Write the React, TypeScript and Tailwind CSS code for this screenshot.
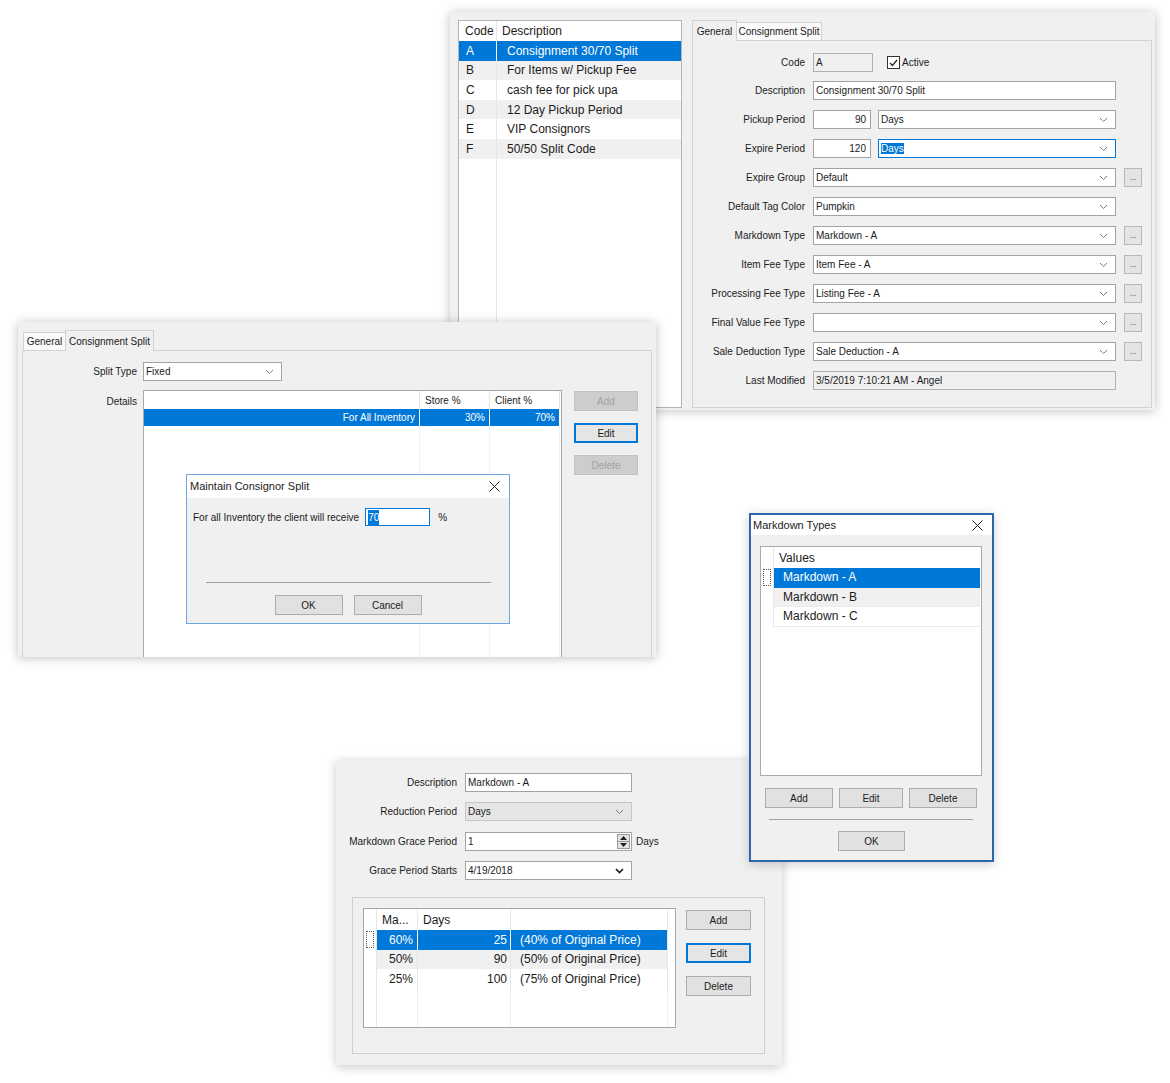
import React from "react";

const btnBase = "h-[20px] flex items-center justify-center text-[10px] border";

function Chevron({ dark = false }: { dark?: boolean }) {
  return (
    <svg width="9" height="6" viewBox="0 0 9 6" className="shrink-0">
      <path
        d="M1 1 L4.5 4.5 L8 1"
        fill="none"
        stroke={dark ? "#1f1f1f" : "#7c7c7c"}
        strokeWidth={dark ? 1.7 : 1}
      />
    </svg>
  );
}

function CloseX() {
  return (
    <svg width="11" height="11" viewBox="0 0 11 11">
      <path d="M0.5 0.5 L10.5 10.5 M10.5 0.5 L0.5 10.5" stroke="#222" strokeWidth="1" />
    </svg>
  );
}

function TextBox({
  value,
  className = "",
  right = false,
  readOnly = false,
}: {
  value?: string;
  className?: string;
  right?: boolean;
  readOnly?: boolean;
}) {
  return (
    <div
      className={`h-[19px] border flex items-center pl-[2px] text-[10px] shrink-0 ${
        readOnly ? "bg-[#f0f0f0] border-[#b0b0b0]" : "bg-white border-[#a3a3a3]"
      } ${right ? "justify-end pr-[4px]" : ""} ${className}`}
    >
      {value}
    </div>
  );
}

function Combo({
  value,
  className = "",
  focused = false,
  disabled = false,
  dark = false,
}: {
  value?: string;
  className?: string;
  focused?: boolean;
  disabled?: boolean;
  dark?: boolean;
}) {
  return (
    <div
      className={`h-[19px] border flex items-center pl-[2px] pr-[7px] text-[10px] shrink-0 ${
        focused
          ? "border-[#0078d7] bg-white"
          : disabled
          ? "border-[#c6c6c6] bg-[#e5e5e5]"
          : "border-[#a3a3a3] bg-white"
      } ${className}`}
    >
      <span className="flex-1 truncate">
        {focused ? <span className="bg-[#0078d7] text-white">{value}</span> : value}
      </span>
      <Chevron dark={dark} />
    </div>
  );
}

function Dots() {
  return (
    <div className="w-[18px] h-[19px] border border-[#b8b8b8] bg-[#e4e4e4] flex items-end justify-center pb-[4px] text-[8px] leading-none text-[#333] shrink-0">
      ...
    </div>
  );
}

function Btn({
  label,
  className = "",
  kind = "normal",
}: {
  label: string;
  className?: string;
  kind?: "normal" | "default" | "disabled";
}) {
  const look =
    kind === "default"
      ? "bg-[#e5e5e5] border-[#0078d7] shadow-[inset_0_0_0_1px_#0078d7]"
      : kind === "disabled"
      ? "bg-[#cdcdcd] border-[#c2c2c2] text-[#a2a2a2]"
      : "bg-[#e1e1e1] border-[#adadad]";
  return <div className={`${btnBase} ${look} ${className}`}>{label}</div>;
}

function FocusRect() {
  return <div className="w-[8px] h-[17px] border border-dotted border-[#555] bg-white" />;
}

const codes = [
  ["A", "Consignment 30/70 Split"],
  ["B", "For Items w/ Pickup Fee"],
  ["C", "cash fee for pick upa"],
  ["D", "12 Day Pickup Period"],
  ["E", "VIP Consignors"],
  ["F", "50/50 Split Code"],
];

const generalRows: { label: string; value: string; dots: boolean }[] = [
  { label: "Expire Group", value: "Default", dots: true },
  { label: "Default Tag Color", value: "Pumpkin", dots: false },
  { label: "Markdown Type", value: "Markdown - A", dots: true },
  { label: "Item Fee Type", value: "Item Fee - A", dots: true },
  { label: "Processing Fee Type", value: "Listing Fee - A", dots: true },
  { label: "Final Value Fee Type", value: "", dots: true },
  { label: "Sale Deduction Type", value: "Sale Deduction - A", dots: true },
];

const markdowns = [
  ["60%", "25", "(40% of Original Price)"],
  ["50%", "90", "(50% of Original Price)"],
  ["25%", "100", "(75% of Original Price)"],
];

function Label({ text, className = "w-[112px]" }: { text: string; className?: string }) {
  return <div className={`text-right text-[10px] shrink-0 ${className}`}>{text}</div>;
}

export default function App() {
  return (
    <div className="relative w-[1170px] h-[1083px] bg-white overflow-hidden font-['Liberation_Sans',Arial,sans-serif] text-[#1b1b1b]">
      {/* Consignment codes window */}
      <div className="absolute left-[450px] top-[12px] w-[705px] h-[398px] bg-[#f0f0f0] shadow-[0_1px_10px_rgba(0,0,0,0.25)] flex pl-[8px] pt-[8px] gap-[10px]">
        <div className="w-[224px] h-[388px] bg-white border border-[#b4b4b4] flex flex-col text-[12px]">
          <div className="flex h-[20px] items-center shrink-0">
            <div className="w-[38px] pl-[6px] h-full flex items-center border-r border-[#e6e6e6]">Code</div>
            <div className="pl-[5px]">Description</div>
          </div>
          {codes.map(([c, d], i) => (
            <div
              key={c}
              className={`flex h-[19.6px] items-center shrink-0 ${
                i === 0 ? "bg-[#0078d7] text-white" : i % 2 === 1 ? "bg-[#f0f0f0]" : ""
              }`}
            >
              <div
                className={`w-[38px] pl-[7px] h-full flex items-center border-r ${
                  i === 0 ? "border-white" : "border-[#e6e6e6]"
                }`}
              >
                {c}
              </div>
              <div className="pl-[10px]">{d}</div>
            </div>
          ))}
          <div className="flex-1 flex">
            <div className="w-[38px] border-r border-[#e6e6e6]" />
          </div>
        </div>

        <div className="w-[460px] flex flex-col">
          <div className="flex items-end h-[20px] text-[10px] shrink-0">
            <div className="w-[45px] h-[21px] bg-[#f0f0f0] border border-b-0 border-[#d2d2d2] flex items-center justify-center relative top-[1px] z-10">
              General
            </div>
            <div className="w-[85px] h-[18px] bg-[#fafafa] border border-l-0 border-b-0 border-[#d2d2d2] flex items-center justify-center">
              Consignment Split
            </div>
          </div>
          <div className="h-[368px] border border-[#d2d2d2] pt-[12px] flex flex-col gap-[10px]">
            <div className="flex items-center h-[19px] gap-[8px]">
              <Label text="Code" />
              <TextBox value="A" readOnly className="w-[60px]" />
              <div className="ml-[6px] w-[13px] h-[13px] border border-[#333] bg-white flex items-center justify-center">
                <svg width="9" height="8" viewBox="0 0 9 8">
                  <path d="M1 4 L3.5 6.5 L8 1" fill="none" stroke="#222" strokeWidth="1.2" />
                </svg>
              </div>
              <div className="text-[10px] -ml-[6px]">Active</div>
            </div>
            <div className="flex items-center h-[19px] gap-[8px] -mt-[1px]">
              <Label text="Description" />
              <TextBox value="Consignment 30/70 Split" className="w-[303px]" />
            </div>
            <div className="flex items-center h-[19px] gap-[8px]">
              <Label text="Pickup Period" />
              <TextBox value="90" right className="w-[58px]" />
              <Combo value="Days" className="w-[238px] -ml-[1px]" />
            </div>
            <div className="flex items-center h-[19px] gap-[8px]">
              <Label text="Expire Period" />
              <TextBox value="120" right className="w-[58px]" />
              <Combo value="Days" focused className="w-[238px] -ml-[1px]" />
            </div>
            {generalRows.map((r) => (
              <div key={r.label} className="flex items-center h-[19px] gap-[8px]">
                <Label text={r.label} />
                <Combo value={r.value} className="w-[303px]" />
                {r.dots && <Dots />}
              </div>
            ))}
            <div className="flex items-center h-[19px] gap-[8px]">
              <Label text="Last Modified" />
              <TextBox value="3/5/2019 7:10:21 AM - Angel" readOnly className="w-[303px]" />
            </div>
          </div>
        </div>
      </div>

      {/* Markdown type editor */}
      <div className="absolute left-[336px] top-[760px] w-[446px] h-[305px] bg-[#f0f0f0] shadow-[0_2px_10px_rgba(0,0,0,0.22)] pt-[13px] flex flex-col">
        <div className="flex flex-col gap-[10px]">
          <div className="flex items-center h-[19px] gap-[8px]">
            <Label text="Description" className="w-[121px]" />
            <TextBox value="Markdown - A" className="w-[167px]" />
          </div>
          <div className="flex items-center h-[19px] gap-[8px]">
            <Label text="Reduction Period" className="w-[121px]" />
            <Combo value="Days" disabled className="w-[167px]" />
          </div>
          <div className="flex items-center h-[19px] gap-[8px] mt-[1px]">
            <Label text="Markdown Grace Period" className="w-[121px]" />
            <div className="w-[167px] h-[19px] border border-[#a3a3a3] bg-white flex items-center pl-[2px] pr-[1px] text-[10px]">
              <span className="flex-1">1</span>
              <div className="w-[13px] h-[15px] flex flex-col border border-[#9a9a9a] bg-[#e4e4e4]">
                <div className="flex-1 flex items-center justify-center border-b border-[#9a9a9a]">
                  <svg width="7" height="4" viewBox="0 0 7 4">
                    <path d="M0 4 L3.5 0 L7 4 Z" fill="#222" />
                  </svg>
                </div>
                <div className="flex-1 flex items-center justify-center">
                  <svg width="7" height="4" viewBox="0 0 7 4">
                    <path d="M0 0 L3.5 4 L7 0 Z" fill="#222" />
                  </svg>
                </div>
              </div>
            </div>
            <div className="text-[10px] -ml-[4px]">Days</div>
          </div>
          <div className="flex items-center h-[19px] gap-[8px]">
            <Label text="Grace Period Starts" className="w-[121px]" />
            <Combo value="4/19/2018" dark className="w-[167px]" />
          </div>
        </div>

        <div className="ml-[16px] mt-[17px] w-[413px] h-[157px] border border-[#cfcfcf] pl-[10px] pt-[10px] flex gap-[10px]">
          <div className="w-[313px] h-[120px] bg-white border border-[#a8a8a8] flex flex-col text-[12px]">
            <div className="flex h-[21px] items-center shrink-0">
              <div className="w-[13px] h-full border-r border-[#e6e6e6]" />
              <div className="w-[41px] h-full flex items-center pl-[5px] border-r border-[#e6e6e6]">Ma...</div>
              <div className="w-[93px] h-full flex items-center pl-[5px] border-r border-[#e6e6e6]">Days</div>
              <div className="w-[157px] h-full border-r border-[#e6e6e6]" />
            </div>
            {markdowns.map(([p, d, t], i) => (
              <div key={p} className="flex h-[19.5px] shrink-0">
                <div className="w-[13px] h-full flex items-center justify-center border-r border-[#e6e6e6]">
                  {i === 0 && <FocusRect />}
                </div>
                <div
                  className={`flex h-full ${
                    i === 0 ? "bg-[#0078d7] text-white" : i === 1 ? "bg-[#f0f0f0]" : ""
                  }`}
                >
                  <div className={`w-[41px] h-full flex items-center justify-end pr-[4px] border-r ${i === 0 ? "border-white" : "border-[#e6e6e6]"}`}>{p}</div>
                  <div className={`w-[93px] h-full flex items-center justify-end pr-[3px] border-r ${i === 0 ? "border-white" : "border-[#e6e6e6]"}`}>{d}</div>
                  <div className="w-[157px] h-full flex items-center pl-[9px] border-r border-[#e6e6e6]">{t}</div>
                </div>
              </div>
            ))}
            <div className="flex flex-1">
              <div className="w-[13px] border-r border-[#e6e6e6]" />
              <div className="w-[41px] border-r border-dotted border-[#e0e0e0]" />
              <div className="w-[93px] border-r border-dotted border-[#e0e0e0]" />
              <div className="w-[157px] border-r border-dotted border-[#e0e0e0]" />
            </div>
          </div>
          <div className="flex flex-col gap-[13px] pt-[2px]">
            <Btn label="Add" className="w-[65px]" />
            <Btn label="Edit" kind="default" className="w-[65px]" />
            <Btn label="Delete" className="w-[65px]" />
          </div>
        </div>
      </div>

      {/* Consignment split tab */}
      <div className="absolute left-[18px] top-[322px] w-[638px] h-[335px] bg-[#f0f0f0] shadow-[0_1px_10px_rgba(0,0,0,0.25)] pl-[4px] pt-[8px] flex flex-col">
        <div className="flex items-end h-[20px] text-[10px] shrink-0">
          <div className="ml-[1px] w-[42px] h-[18px] bg-[#fafafa] border border-r-0 border-b-0 border-[#d2d2d2] flex items-center justify-center">
            General
          </div>
          <div className="w-[89px] h-[21px] bg-[#f0f0f0] border border-b-0 border-[#d2d2d2] flex items-center justify-center relative top-[1px] z-10">
            Consignment Split
          </div>
        </div>
        <div className="w-[630px] flex-1 border border-b-0 border-[#d2d2d2] pt-[11px] flex flex-col">
          <div className="flex items-center h-[19px] gap-[6px]">
            <Label text="Split Type" className="w-[114px]" />
            <Combo value="Fixed" className="w-[139px]" />
          </div>
          <div className="flex mt-[9px] flex-1">
            <Label text="Details" className="w-[114px] pt-[4px]" />
            <div className="ml-[6px] w-[419px] h-[267px] bg-white border border-b-0 border-[#a8a8a8] flex text-[10px]">
              {[
                { w: "w-[276px]", h: "", v: "For All Inventory" },
                { w: "w-[70px]", h: "Store %", v: "30%" },
                { w: "w-[70px]", h: "Client %", v: "70%" },
              ].map((c) => (
                <div key={c.v} className={`${c.w} flex flex-col`}>
                  <div className="h-[18px] flex items-center pl-[5px] border-r border-[#e3e3e3] shrink-0">{c.h}</div>
                  <div className="h-[17px] flex items-center justify-end pr-[4px] bg-[#0078d7] text-white border-r border-white shrink-0">
                    {c.v}
                  </div>
                  <div className="flex-1 border-r border-dotted border-[#e3e3e3]" />
                </div>
              ))}
            </div>
            <div className="ml-[12px] pt-[1px] flex flex-col gap-[12px]">
              <Btn label="Add" kind="disabled" className="w-[64px]" />
              <Btn label="Edit" kind="default" className="w-[64px]" />
              <Btn label="Delete" kind="disabled" className="w-[64px]" />
            </div>
          </div>
        </div>
      </div>

      {/* Maintain Consignor Split dialog */}
      <div className="absolute left-[186px] top-[474px] w-[324px] h-[150px] border border-[#6ea7e4] bg-[#f0f0f0] flex flex-col">
        <div className="h-[23px] bg-white flex items-center justify-between pl-[3px] pr-[9px] text-[11px] shrink-0">
          <span>Maintain Consignor Split</span>
          <CloseX />
        </div>
        <div className="flex items-center h-[18px] mt-[10px] pl-[6px] text-[10px]">
          <span>For all Inventory the client will receive</span>
          <div className="ml-[6px] w-[65px] h-[18px] border border-[#0078d7] bg-white flex items-center pl-[2px]">
            <span className="bg-[#0078d7] text-white">70</span>
          </div>
          <span className="ml-[8px]">%</span>
        </div>
        <div className="mx-auto mt-[56px] w-[285px] border-t border-[#a0a0a0]" />
        <div className="flex justify-center gap-[11px] mt-[12px]">
          <Btn label="OK" className="w-[68px]" />
          <Btn label="Cancel" className="w-[68px]" />
        </div>
      </div>

      {/* Markdown Types dialog */}
      <div className="absolute left-[749px] top-[513px] w-[245px] h-[349px] border-2 border-[#2d66ac] bg-[#f0f0f0] shadow-[0_2px_10px_rgba(0,0,0,0.2)] flex flex-col">
        <div className="h-[20px] bg-white flex items-center justify-between pl-[2px] pr-[9px] text-[11px] shrink-0">
          <span>Markdown Types</span>
          <CloseX />
        </div>
        <div className="ml-[9px] mt-[11px] w-[222px] h-[230px] bg-white border border-[#ababab] flex flex-col text-[12px] shrink-0">
          <div className="flex h-[21px] shrink-0">
            <div className="w-[13px] h-full border-r border-[#e6e6e6]" />
            <div className="flex-1 flex items-center pl-[5px]">Values</div>
          </div>
          {["Markdown - A", "Markdown - B", "Markdown - C"].map((v, i) => (
            <div key={v} className="flex h-[19.5px] shrink-0">
              <div className="w-[13px] h-full flex items-center justify-center border-r border-[#e6e6e6]">
                {i === 0 && <FocusRect />}
              </div>
              <div
                className={`flex-1 mr-[1px] flex items-center pl-[9px] border-b ${
                  i === 0 ? "bg-[#0078d7] text-white border-[#0078d7]" : i === 1 ? "bg-[#f0f0f0] border-[#ececec]" : "border-[#ececec]"
                }`}
              >
                {v}
              </div>
            </div>
          ))}
        </div>
        <div className="flex gap-[6px] ml-[14px] mt-[12px]">
          <Btn label="Add" className="w-[68px]" />
          <Btn label="Edit" className="w-[64px]" />
          <Btn label="Delete" className="w-[68px]" />
        </div>
        <div className="ml-[18px] mt-[11px] w-[204px] border-t border-[#a0a0a0]" />
        <div className="ml-[87px] mt-[11px]">
          <Btn label="OK" className="w-[67px]" />
        </div>
      </div>
    </div>
  );
}
